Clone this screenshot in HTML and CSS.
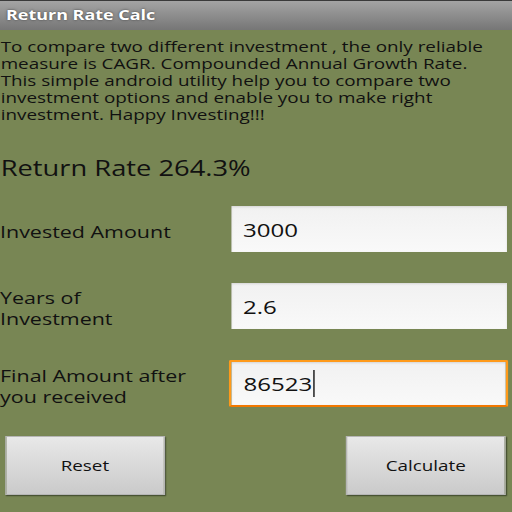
FILE: index.html
```html
<!DOCTYPE html>
<html>
<head>
<meta charset="utf-8">
<link rel="stylesheet" href="styles.css">
</head>
<body>
<div class="page">
  <div class="titlebar">Return Rate Calc</div>
  <div class="content">
    <p class="intro">To compare two different investment , the only reliable measure is CAGR. Compounded Annual Growth Rate. This simple android utility help you to compare two investment options and enable you to make right investment. Happy Investing!!!</p>
    <div class="rate">Return Rate 264.3%</div>
    <div class="form">
      <div class="label">Invested Amount</div>
      <div class="field"><span class="value">3000</span></div>
      <div class="label">Years of<br>Investment</div>
      <div class="field"><span class="value">2.6</span></div>
      <div class="label">Final Amount after<br>you received</div>
      <div class="field focused"><span class="value">86523</span><span class="caret"></span></div>
    </div>
    <div class="buttons">
      <div class="btn">Reset</div>
      <div class="btn">Calculate</div>
    </div>
  </div>
</div>
</body>
</html>
```

FILE: styles.css
```css
html, body {
  margin: 0;
  padding: 0;
}
body {
  width: 512px;
  height: 512px;
  overflow: hidden;
  background: #788654;
  font-family: "Open Sans", "DejaVu Sans", sans-serif;
  color: #111;
}
/* the screenshot is stretched horizontally, so the page is drawn narrow and widened */
.page {
  width: 394px;
  height: 512px;
  transform: scaleX(1.3);
  transform-origin: 0 0;
}
.titlebar {
  height: 29px;
  border-top: 1px solid #3a3a3a;
  background: linear-gradient(#a4a4a4, #767676);
  color: #fff;
  font-weight: bold;
  font-size: 13.8px;
  line-height: 28px;
  padding-left: 4.6px;
  text-shadow: 0 0 2px #3a3a3a;
}
.content {
  padding-top: 8px;
}
.intro {
  margin: 0;
  font-size: 14.5px;
  line-height: 17px;
  padding: 0 12px 0 0.5px;
}
.rate {
  margin-top: 32px;
  font-size: 21px;
  line-height: 26px;
  padding-left: 0.5px;
}
.form {
  margin-top: 25px;
  display: grid;
  grid-template-columns: 177.7px 212.3px;
  row-gap: 31px;
  align-items: center;
}
.label {
  font-size: 16.5px;
  line-height: 21px;
  padding-top: 4px;
}
.field {
  height: 46px;
  background: linear-gradient(#f1f1f1, #f9f9f9);
  box-shadow: inset 0 1px 2px rgba(0,0,0,0.12);
  display: flex;
  align-items: center;
  padding-left: 9.2px;
  font-size: 18.5px;
}
.field.focused {
  margin: 0 -1.5px;
  height: 43px;
  border: 2px solid #ff9a1a;
  border-bottom-color: #f27800;
  border-radius: 2px;
}
.caret {
  display: inline-block;
  width: 1px;
  height: 27px;
  background: #000;
  margin-left: 0.5px;
}
.buttons {
  margin-top: 29px;
  display: flex;
  justify-content: space-between;
  padding: 0 5px 0 3.8px;
}
.btn {
  width: 121px;
  height: 57px;
  background: linear-gradient(#e8e8e8, #cacaca);
  border: 1px solid #b5b5b5;
  box-shadow: 0.8px 1px 1px #3e472c;
  display: flex;
  align-items: center;
  justify-content: center;
  font-size: 14.5px;
}
```
